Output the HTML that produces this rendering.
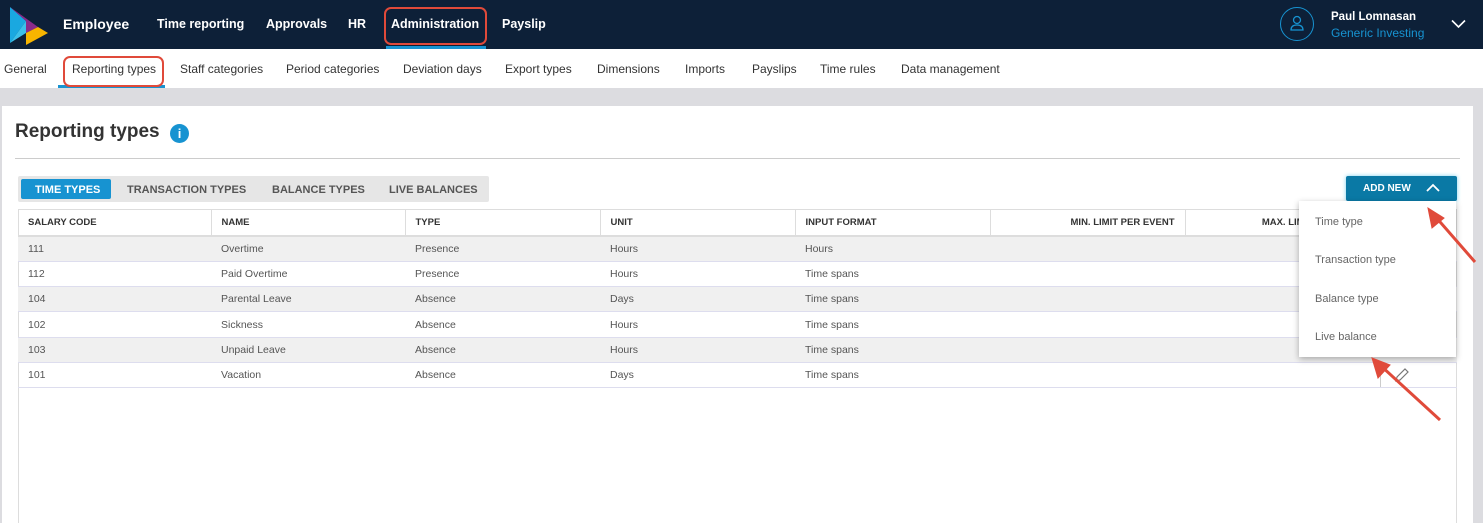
<!DOCTYPE html><html><head><style>
*{box-sizing:border-box;margin:0;padding:0}
html,body{width:1483px;height:523px;overflow:hidden}
body{background:#dcdce0;font-family:"Liberation Sans",sans-serif;position:relative}
.hdr{position:absolute;left:0;top:0;width:1483px;height:49px;background:#0d2038;color:#fff;font-weight:bold;font-size:12.5px}
.hdr span{position:absolute;top:17px}
.sub{position:absolute;left:0;top:49px;width:1483px;height:39px;background:#fff;font-size:12px;color:#333}
.sub span{position:absolute;top:13px}
.card{position:absolute;left:2px;top:106px;width:1471px;height:417px;background:#fff}
.red{position:absolute;border:2.5px solid #e04a3a;border-radius:7px}
table{border-collapse:collapse;position:absolute;left:18px;top:210px;width:1439px;font-size:10.5px;color:#555;table-layout:fixed}
th{height:26px;text-align:left;padding-left:10px;font-size:9.5px;color:#333;border-right:1.5px solid #ddd;border-bottom:2px solid #ddd}
td{height:25.3px;padding-left:10px;border-bottom:1px solid #dde}
tr.g td{background:#f0f0f0}
.tbl{position:absolute;left:18px;top:209px;width:1439px;height:314px;border:1.5px solid #ddd;border-bottom:0}
.dd{position:absolute;left:1299px;top:201px;width:157px;height:156px;background:#fff;box-shadow:0 2px 6px rgba(0,0,0,.3);font-size:11px;color:#666}
.dd div{position:absolute;left:16px}
</style></head><body>
<div class="hdr">
<svg style="position:absolute;left:8px;top:5px" width="40" height="40" viewBox="0 0 40 40"><polygon points="2,2 18,16 2,38" fill="#1aa8e0"/><polygon points="18,16 2,38 18,28" fill="#3cc0ea"/><polygon points="2,2 18,16 18,28 30,22" fill="#8a2a8a"/><polygon points="18,28 30,22 40,28 18,40" fill="#f7b500"/></svg>
<span style="left:63px;font-size:14px;top:16px">Employee</span>
<span style="left:157px">Time reporting</span><span style="left:266px">Approvals</span><span style="left:348px">HR</span><span style="left:391px">Administration</span><span style="left:502px">Payslip</span>
<div style="position:absolute;left:386px;top:46px;width:100px;height:3px;background:#1793d1"></div>
<div style="position:absolute;left:1280px;top:7px;width:34px;height:34px;border:1.5px solid #1793d1;border-radius:50%"></div>
<svg style="position:absolute;left:1288px;top:14px" width="18" height="18" viewBox="0 0 18 18" fill="none" stroke="#1793d1" stroke-width="1.3"><circle cx="9" cy="6" r="3.5"/><path d="M3 16c0-4 3-5 6-5s6 1 6 5z"/></svg>
<span style="left:1331px;top:11px;font-size:11.5px">Paul Lomnasan</span>
<span style="left:1331px;top:26px;font-weight:normal;color:#1793d1;font-size:12px">Generic Investing</span>
<svg style="position:absolute;left:1451px;top:19px" width="15" height="10" viewBox="0 0 15 10" fill="none" stroke="#fff" stroke-width="1.6"><path d="M1 1.5l6.5 6.5 6.5-6.5"/></svg>
</div>
<div class="red" style="left:384px;top:7px;width:103px;height:38px"></div>
<div class="sub">
<span style="left:4px">General</span><span style="left:72px">Reporting types</span><span style="left:180px">Staff categories</span><span style="left:286px">Period categories</span><span style="left:403px">Deviation days</span><span style="left:505px">Export types</span><span style="left:597px">Dimensions</span><span style="left:685px">Imports</span><span style="left:752px">Payslips</span><span style="left:820px">Time rules</span><span style="left:901px">Data management</span>
<div style="position:absolute;left:58px;top:36px;width:107px;height:3px;background:#1793d1"></div>
</div>
<div class="red" style="left:63px;top:56px;width:101px;height:31px"></div>
<div class="card"></div>
<div style="position:absolute;left:15px;top:121px;font-size:19px;font-weight:bold;color:#333">Reporting types</div>
<div style="position:absolute;left:170px;top:124px;width:19px;height:19px;border-radius:50%;background:#1793d1;color:#fff;font-size:13px;font-weight:bold;text-align:center;line-height:19px">i</div>
<div style="position:absolute;left:15px;top:158px;width:1445px;height:1px;background:#ccc"></div>
<div style="position:absolute;left:18px;top:176px;width:471px;height:26px;background:#e6e6e6;border-radius:2px"></div>
<div style="position:absolute;left:21px;top:179px;width:90px;height:20px;background:#1793d1;border-radius:2px"></div>
<div style="position:absolute;top:184px;font-size:11px;font-weight:bold;color:#555;white-space:nowrap">
<span style="position:absolute;left:35px;color:#fff">TIME TYPES</span><span style="position:absolute;left:127px">TRANSACTION TYPES</span><span style="position:absolute;left:272px">BALANCE TYPES</span><span style="position:absolute;left:389px">LIVE BALANCES</span></div>
<div style="position:absolute;left:1346px;top:176px;width:111px;height:25px;background:#0a79a5;border-radius:2px;box-shadow:0 0 4px #7cd0ee;color:#fff;font-size:10px;font-weight:bold">
<span style="position:absolute;left:17px;top:7px">ADD NEW</span>
<svg style="position:absolute;left:80px;top:7px" width="14" height="10" viewBox="0 0 14 10" fill="none" stroke="#fff" stroke-width="1.8"><path d="M1 8l6-6 6 6"/></svg></div>
<div class="tbl"></div>
<table><colgroup><col style="width:193px"><col style="width:194px"><col style="width:195px"><col style="width:195px"><col style="width:195px"><col style="width:195px"><col style="width:195px"><col></colgroup>
<tr><th>SALARY CODE</th><th>NAME</th><th>TYPE</th><th>UNIT</th><th>INPUT FORMAT</th><th style="text-align:right;padding-right:10px">MIN. LIMIT PER EVENT</th><th style="text-align:right;padding-right:10px">MAX. LIMIT PER EVENT</th><th style="border-right:0"></th></tr>
<tr class="g"><td>111</td><td>Overtime</td><td>Presence</td><td>Hours</td><td>Hours</td><td></td><td></td><td></td></tr>
<tr><td>112</td><td>Paid Overtime</td><td>Presence</td><td>Hours</td><td>Time spans</td><td></td><td></td><td></td></tr>
<tr class="g"><td>104</td><td>Parental Leave</td><td>Absence</td><td>Days</td><td>Time spans</td><td></td><td></td><td></td></tr>
<tr><td>102</td><td>Sickness</td><td>Absence</td><td>Hours</td><td>Time spans</td><td></td><td></td><td></td></tr>
<tr class="g"><td>103</td><td>Unpaid Leave</td><td>Absence</td><td>Hours</td><td>Time spans</td><td></td><td></td><td></td></tr>
<tr><td>101</td><td>Vacation</td><td>Absence</td><td>Days</td><td>Time spans</td><td></td><td style="border-right:1px solid #ccc"></td><td></td></tr>
</table>
<svg style="position:absolute;left:1393px;top:366px" width="18" height="18" viewBox="0 0 18 18" fill="none" stroke="#777" stroke-width="1.2"><path d="M3 15l1-4 8-8 3 3-8 8z"/></svg>
<div class="dd"><div style="top:15px">Time type</div><div style="top:53px">Transaction type</div><div style="top:92px">Balance type</div><div style="top:130px">Live balance</div></div>
<svg style="position:absolute;left:0;top:0" width="1483" height="523"><g fill="#e04a3a" stroke="#e04a3a"><line x1="1475" y1="262" x2="1434" y2="215" stroke-width="3"/><polygon points="1428,208 1444,218 1432,228"/><line x1="1440" y1="420" x2="1380" y2="365" stroke-width="3"/><polygon points="1372,358 1390,365 1378,378"/></g></svg>
</body></html>
